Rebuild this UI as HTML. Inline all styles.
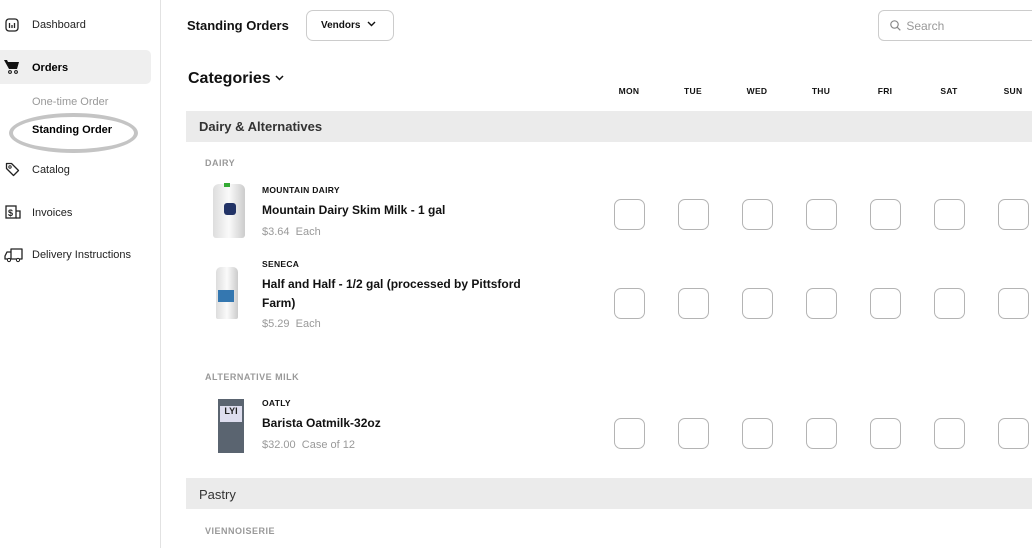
<!DOCTYPE html><html><head><style>
*{margin:0;padding:0;box-sizing:border-box}
body{width:1032px;height:548px;overflow:hidden;background:#fff;font-family:"Liberation Sans",sans-serif;color:#111;position:relative}
.a{position:absolute;white-space:nowrap}
.nav{font-size:11px;color:#222}
.cb{position:absolute;width:31px;height:31px;border:1.5px solid #b4b4b4;border-radius:7px}
.day{position:absolute;top:86px;font-size:8.5px;font-weight:bold;width:40px;text-align:center;letter-spacing:.3px}
.band{position:absolute;left:186px;width:846px;height:31px;background:#ebebeb}
.cat{font-size:9px;font-weight:bold;color:#999;letter-spacing:.5px}
.ven{font-size:8.5px;font-weight:bold;letter-spacing:.3px}
.nm{font-size:12px;font-weight:bold}
.pr{font-size:11px;color:#999}
</style></head><body>
<div class="a" style="left:160px;top:0;width:1px;height:548px;background:#e2e2e2"></div>
<div class="a" style="left:0;top:50px;width:151px;height:34px;background:#efefef;border-radius:0 5px 5px 0"></div>
<div class="a" style="left:9px;top:113px;width:129px;height:40px;border:4px solid #c4c4c4;border-radius:50%"></div>
<svg class="a" style="left:5px;top:18px" width="14" height="14" viewBox="0 0 14 14"><rect x="1" y="1" width="12" height="12" rx="3" fill="none" stroke="#222" stroke-width="1.3"/><path d="M4.5 5v5M7 7v3M9.5 5v5" stroke="#222" stroke-width="1.3"/></svg>
<div class="a nav" style="left:32px;top:19px">Dashboard</div>
<svg class="a" style="left:4px;top:59px" width="16" height="16" viewBox="0 0 16 16"><path d="M0 1h3l1 2h11l-2 7H5z" fill="#111"/><circle cx="6" cy="13" r="1.4" fill="none" stroke="#111"/><circle cx="12" cy="13" r="1.4" fill="none" stroke="#111"/></svg>
<div class="a nav" style="left:32px;top:62px;font-weight:bold;color:#000">Orders</div>
<div class="a nav" style="left:32px;top:96px;color:#999">One-time Order</div>
<div class="a nav" style="left:32px;top:124px;font-weight:bold;color:#000">Standing Order</div>
<svg class="a" style="left:5px;top:162px" width="15" height="15" viewBox="0 0 15 15"><path d="M1.5 1.5h5l7 7-5 5-7-7z" fill="none" stroke="#222" stroke-width="1.3" stroke-linejoin="round"/><circle cx="5" cy="5" r="1.2" fill="none" stroke="#222"/></svg>
<div class="a nav" style="left:32px;top:164px">Catalog</div>
<svg class="a" style="left:5px;top:205px" width="16" height="15" viewBox="0 0 16 15"><rect x="1" y="1" width="10" height="12" fill="none" stroke="#222" stroke-width="1.3"/><path d="M11 6h4v7h-4" fill="none" stroke="#222" stroke-width="1.3"/><text x="3" y="11" font-size="9" font-family="Liberation Sans" font-weight="bold" fill="#222">$</text></svg>
<div class="a nav" style="left:32px;top:207px">Invoices</div>
<svg class="a" style="left:4px;top:247px" width="19" height="16" viewBox="0 0 19 16"><path d="M7 2h11v10H7zM7 5H3L1 9v3h6" fill="none" stroke="#222" stroke-width="1.3" stroke-linejoin="round"/><circle cx="5" cy="13" r="1.6" fill="#fff" stroke="#222"/><circle cx="14" cy="13" r="1.6" fill="#fff" stroke="#222"/></svg>
<div class="a nav" style="left:32px;top:249px">Delivery Instructions</div>

<div class="a" style="left:187px;top:18px;font-size:13px;font-weight:bold">Standing Orders</div>
<div class="a" style="left:306px;top:10px;width:88px;height:31px;border:1px solid #ccc;border-radius:7px;font-size:10px;font-weight:bold;padding:9px 0 0 14px">Vendors <svg width="9" height="6" viewBox="0 0 9 6" style="margin-left:4px;vertical-align:1px"><path d="M1 1l3.5 3.5L8 1" fill="none" stroke="#111" stroke-width="1.4"/></svg></div>
<div class="a" style="left:878px;top:10px;width:170px;height:31px;border:1px solid #ccc;border-radius:6px;font-size:12px;color:#999;padding:8px 0 0 11px"><svg width="11" height="11" viewBox="0 0 11 11" style="vertical-align:-1px;margin-right:2px"><circle cx="4.5" cy="4.5" r="3.7" fill="none" stroke="#888" stroke-width="1.2"/><path d="M7.3 7.3l3 3" stroke="#888" stroke-width="1.2"/></svg> Search</div>
<div class="a" style="left:188px;top:70px;font-size:16px;font-weight:bold">Categories <svg width="9" height="6" viewBox="0 0 9 6" style="vertical-align:2px"><path d="M1 1l3.5 3.5L8 1" fill="none" stroke="#111" stroke-width="1.5"/></svg></div>
<div class="day" style="left:609px">MON</div><div class="day" style="left:673px">TUE</div><div class="day" style="left:737px">WED</div><div class="day" style="left:801px">THU</div><div class="day" style="left:865px">FRI</div><div class="day" style="left:929px">SAT</div><div class="day" style="left:993px">SUN</div>
<div class="band" style="top:111px"></div>
<div class="a" style="left:199px;top:119px;font-size:13px;font-weight:bold;color:#333">Dairy &amp; Alternatives</div>
<div class="a cat" style="left:205px;top:158px">DAIRY</div>
<div class="a" style="left:213px;top:184px;width:32px;height:54px;background:linear-gradient(90deg,#ddd,#fafafa,#ccc);border-radius:6px 6px 3px 3px"></div>
<div class="a" style="left:224px;top:183px;width:6px;height:4px;background:#3a3"></div>
<div class="a" style="left:224px;top:203px;width:12px;height:12px;background:#236;border-radius:3px"></div>
<div class="a ven" style="left:262px;top:185px">MOUNTAIN DAIRY</div>
<div class="a nm" style="left:262px;top:203px">Mountain Dairy Skim Milk - 1 gal</div>
<div class="a pr" style="left:262px;top:226px">$3.64 &nbsp;Each</div>
<div class="a" style="left:216px;top:267px;width:22px;height:52px;background:linear-gradient(90deg,#ddd,#fafafa,#ccc);border-radius:5px 5px 2px 2px"></div>
<div class="a" style="left:218px;top:290px;width:16px;height:12px;background:#3477b0"></div>
<div class="a ven" style="left:262px;top:259px">SENECA</div>
<div class="a nm" style="left:262px;top:277px">Half and Half - 1/2 gal (processed by Pittsford</div>
<div class="a nm" style="left:262px;top:296px">Farm)</div>
<div class="a pr" style="left:262px;top:318px">$5.29 &nbsp;Each</div>
<div class="a cat" style="left:205px;top:372px">ALTERNATIVE MILK</div>
<div class="a" style="left:218px;top:399px;width:26px;height:54px;background:#5a6470"></div>
<div class="a" style="left:220px;top:406px;width:22px;height:16px;background:#dde;font-size:9px;font-weight:bold;text-align:center;color:#222">LYI</div>
<div class="a ven" style="left:262px;top:398px">OATLY</div>
<div class="a nm" style="left:262px;top:416px">Barista Oatmilk-32oz</div>
<div class="a pr" style="left:262px;top:439px">$32.00 &nbsp;Case of 12</div>
<div class="band" style="top:478px"></div>
<div class="a" style="left:199px;top:487px;font-size:13px;color:#333">Pastry</div>
<div class="a cat" style="left:205px;top:526px">VIENNOISERIE</div>
<div id="cbs"></div>
<script>
var h='';[199,288,418].forEach(function(y){for(var i=0;i<7;i++)h+='<div class="cb" style="left:'+(614+64*i)+'px;top:'+y+'px"></div>';});document.getElementById('cbs').innerHTML=h;
</script>
</body></html>
